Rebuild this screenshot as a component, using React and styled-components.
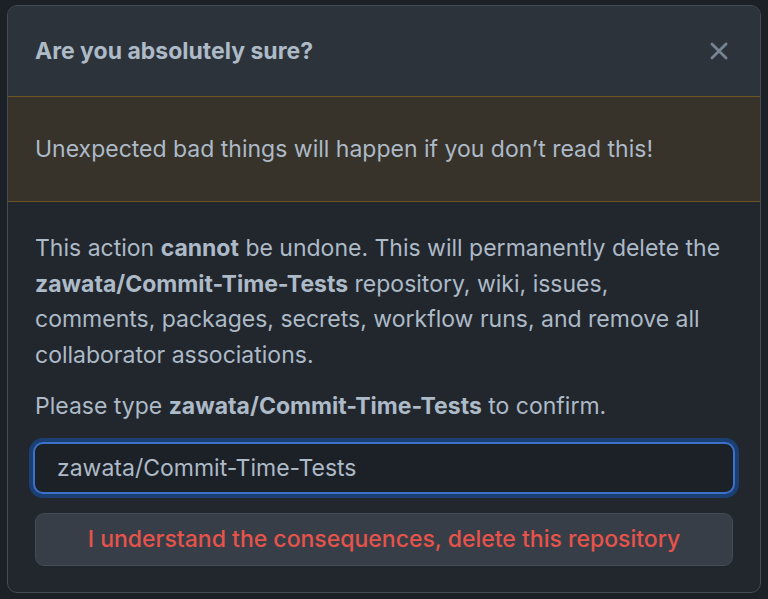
import styled, { createGlobalStyle } from "styled-components";

const GlobalStyle = createGlobalStyle`
  * { box-sizing: border-box; }
  body {
    margin: 0;
    background: #1c2128;
    font-family: Inter, "Noto Sans", "Liberation Sans", sans-serif;
    color: #adbac7;
  }
`;

export default function App() {
  return (
    <>
      <GlobalStyle />
      <Page>
        <Dialog>
          <Header>
            <Title>Are you absolutely sure?</Title>
            <CloseButton aria-label="Close">
              <svg width="30" height="30" viewBox="0 0 16 16" fill="currentColor">
                <path d="M3.72 3.72a.75.75 0 0 1 1.06 0L8 6.94l3.22-3.22a.749.749 0 0 1 1.275.326.749.749 0 0 1-.215.734L9.06 8l3.22 3.22a.749.749 0 0 1-.326 1.275.749.749 0 0 1-.734-.215L8 9.06l-3.22 3.22a.751.751 0 0 1-1.042-.018.751.751 0 0 1-.018-1.042L6.94 8 3.72 4.78a.75.75 0 0 1 0-1.06Z" />
              </svg>
            </CloseButton>
          </Header>
          <Warning>Unexpected bad things will happen if you don’t read this!</Warning>
          <Body>
            <Text>
              This action <b>cannot</b> be undone. This will permanently delete the{" "}
              <b>zawata/Commit-Time-Tests</b> repository, wiki, issues, comments, packages,
              secrets, workflow runs, and remove all collaborator associations.
            </Text>
            <Text>
              Please type <b>zawata/Commit-Time-Tests</b> to confirm.
            </Text>
            <Input defaultValue="zawata/Commit-Time-Tests" />
            <DangerButton>I understand the consequences, delete this repository</DangerButton>
          </Body>
        </Dialog>
      </Page>
    </>
  );
}

const Page = styled.div`
  padding: 5px 7px;
  height: 599px;
`;

const Dialog = styled.div`
  width: 754px;
  background: #22272e;
  border: 1px solid #444c56;
  border-radius: 10px;
  overflow: hidden;
`;

const Header = styled.div`
  height: 90px;
  background: #2d333b;
  display: flex;
  align-items: center;
  justify-content: space-between;
  padding: 0 26px 0 27px;
`;

const Title = styled.h1`
  margin: 0;
  font-size: 23px;
  font-weight: 700;
  color: #adbac7;
`;

const CloseButton = styled.button`
  background: none;
  border: none;
  padding: 0;
  color: #768390;
  display: flex;
`;

const Warning = styled.div`
  height: 106px;
  display: flex;
  align-items: center;
  padding: 0 27px;
  font-size: 23px;
  background: #37322a;
  border-top: 1px solid #6b5523;
  border-bottom: 1px solid #6b5523;
`;

const Body = styled.div`
  padding: 29px 27px 26px;
  display: flex;
  flex-direction: column;
`;

const Text = styled.p`
  margin: 0 0 16px;
  font-size: 23px;
  line-height: 35.5px;
  b { font-weight: 700; }
`;

const Input = styled.input`
  height: 52px;
  margin: 1px -2px 0;
  padding: 0 22px;
  font-family: inherit;
  font-size: 23px;
  color: #adbac7;
  background: #1c2128;
  border: 2px solid #3b72c9;
  border-radius: 10px;
  box-shadow: 0 0 0 4px #1c3f73;
  outline: none;
`;

const DangerButton = styled.button`
  margin-top: 19px;
  height: 53px;
  font-family: inherit;
  font-size: 23px;
  font-weight: 500;
  color: #e5534b;
  background: #373e47;
  border: 1px solid #444c56;
  border-radius: 9px;
`;
